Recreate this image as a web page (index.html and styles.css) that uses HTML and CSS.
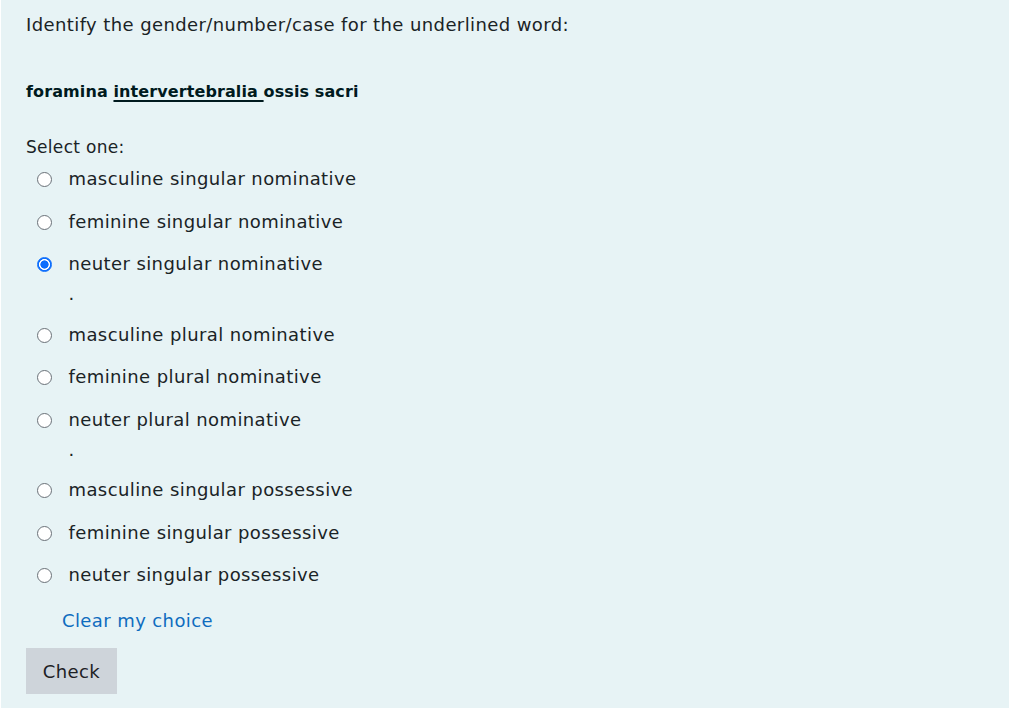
FILE: index.html
```html
<!DOCTYPE html>
<html>
<head>
<meta charset="utf-8">
<link rel="stylesheet" href="styles.css">
</head>
<body>
<div class="formulation">
  <div class="qtext">
    <p class="prompt">Identify the gender/number/case for the underlined word:</p>
    <p class="phrase">foramina <u>intervertebralia </u>ossis sacri</p>
  </div>
  <div class="ablock">
    <div class="prompt-select">Select one:</div>
    <div class="answer">
      <label class="opt"><span class="radio"></span><span class="lbl">masculine singular nominative</span></label>
      <label class="opt"><span class="radio"></span><span class="lbl">feminine singular nominative</span></label>
      <label class="opt"><span class="radio checked"></span><span class="lbl">neuter singular nominative<span class="dot">.</span></span></label>
      <label class="opt"><span class="radio"></span><span class="lbl">masculine plural nominative</span></label>
      <label class="opt"><span class="radio"></span><span class="lbl">feminine plural nominative</span></label>
      <label class="opt"><span class="radio"></span><span class="lbl">neuter plural nominative<span class="dot">.</span></span></label>
      <label class="opt"><span class="radio"></span><span class="lbl">masculine singular possessive</span></label>
      <label class="opt"><span class="radio"></span><span class="lbl">feminine singular possessive</span></label>
      <label class="opt"><span class="radio"></span><span class="lbl">neuter singular possessive</span></label>
    </div>
    <div class="clear"><a href="#">Clear my choice</a></div>
  </div>
  <div class="actions"><button class="check">Check</button></div>
</div>
</body>
</html>
```
FILE: styles.css
```css
html, body {
  margin: 0;
  padding: 0;
  background: #ffffff;
}
body {
  font-family: "DejaVu Sans", sans-serif;
  font-size: 18px;
  letter-spacing: 0.4px;
  color: #1a2326;
}
.formulation {
  margin-left: 1px;
  width: 1008px;
  min-height: 708px;
  background: #e7f3f5;
  box-sizing: border-box;
  padding: 14px 25px 0 25px;
}
.qtext p {
  margin: 0;
  line-height: 22px;
}
.phrase {
  margin-top: 45px !important;
  font-weight: bold;
  font-size: 16px;
  letter-spacing: 0.1px;
  color: #001a1e;
}
.phrase u {
  text-decoration-thickness: 1.5px;
  text-underline-offset: 3px;
}
.ablock {
  margin-top: 33px;
}
.prompt-select {
  line-height: 22px;
  font-size: 17px;
  letter-spacing: 0.3px;
}
.answer {
  margin-top: 10px;
  padding-left: 11px;
}
.opt {
  display: flex;
  align-items: flex-start;
  line-height: 22px;
}
.opt + .opt {
  margin-top: 20.5px;
}
.radio {
  flex: none;
  width: 15px;
  height: 15px;
  box-sizing: border-box;
  border: 1px solid #6a7178;
  border-radius: 50%;
  background: #ffffff;
  margin-top: 4px;
  margin-right: 17px;
  margin-left: -0.5px;
}
.radio.checked {
  border-color: #0d6efd;
  background: radial-gradient(circle, #0d6efd 0 3.8px, #ffffff 4.4px 5.2px, #0d6efd 5.8px);
}
.lbl {
  display: flex;
  flex-direction: column;
}
.dot {
  display: block;
  line-height: 22px;
  margin-top: 8px;
  margin-bottom: -2px;
}
.clear {
  padding-left: 36px;
  margin-top: 24px;
  line-height: 22px;
}
.clear a {
  color: #0f6cbf;
  text-decoration: none;
}
.actions {
  margin-top: 16px;
}
.check {
  font-family: inherit;
  font-size: 18px;
  letter-spacing: 0.4px;
  color: #1d2125;
  background: #ced4da;
  border: none;
  border-radius: 0;
  width: 91px;
  height: 46px;
  padding: 0;
}
```
